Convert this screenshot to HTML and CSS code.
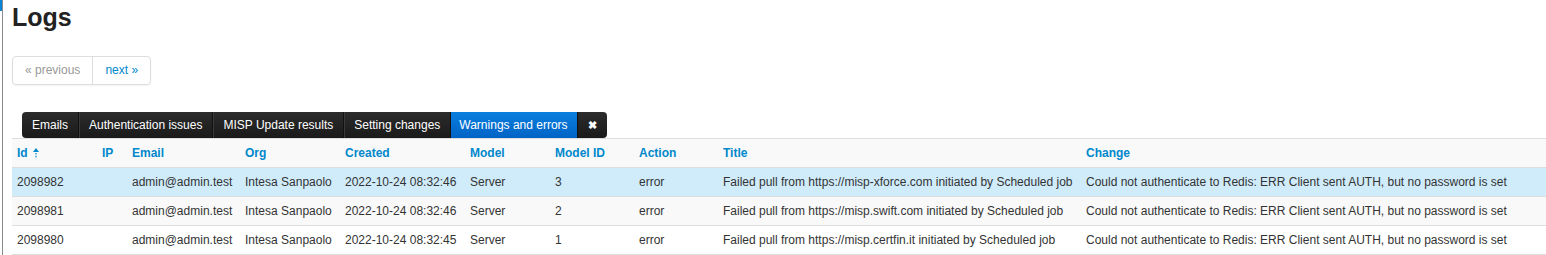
FILE: index.html
```html
<!doctype html>
<html lang="en">
  <head>
    <meta charset="utf-8">
    <title>Logs</title>
    <link rel="stylesheet" href="styles.css">
  </head>
  <body>
    <section class="page">
      <div class="side_strip"><div class="side_strip__mark"></div></div>
      <div class="content">
        <h2>Logs</h2>
        <div class="pagination">
          <span class="pagination__item disabled">&laquo; previous</span>
          <a class="pagination__item" href="#">next &raquo;</a>
        </div>
        <div class="filter_bar">
          <a class="filter_bar__item" href="#">Emails</a>
          <a class="filter_bar__item" href="#">Authentication issues</a>
          <a class="filter_bar__item" href="#">MISP Update results</a>
          <a class="filter_bar__item" href="#">Setting changes</a>
          <a class="filter_bar__item active" href="#">Warnings and errors</a>
          <a class="filter_bar__item close" href="#">&#10006;</a>
        </div>
        <table class="logs">
          <colgroup>
            <col style="width:85px"><col style="width:30px"><col style="width:113px"><col style="width:100px">
            <col style="width:125px"><col style="width:85px"><col style="width:84px"><col style="width:84px">
            <col style="width:363px"><col>
          </colgroup>
          <thead>
            <tr>
              <th>Id <svg class="sort_icon" width="6" height="10" viewBox="0 0 6 10"><path d="M3 0 L6 4 L0 4 Z" fill="#0088cc"/><rect x="2.4" y="5" width="1.2" height="1.5" fill="#0088cc"/><rect x="2.4" y="7.8" width="1.2" height="1.5" fill="#0088cc"/></svg></th>
              <th>IP</th>
              <th>Email</th>
              <th>Org</th>
              <th>Created</th>
              <th>Model</th>
              <th>Model ID</th>
              <th>Action</th>
              <th>Title</th>
              <th>Change</th>
            </tr>
          </thead>
          <tbody>
            <tr class="info">
              <td>2098982</td><td></td><td>admin@admin.test</td><td>Intesa Sanpaolo</td><td>2022-10-24 08:32:46</td><td>Server</td><td>3</td><td>error</td>
              <td>Failed pull from https://misp-xforce.com initiated by Scheduled job</td>
              <td>Could not authenticate to Redis: ERR Client sent AUTH, but no password is set</td>
            </tr>
            <tr class="odd">
              <td>2098981</td><td></td><td>admin@admin.test</td><td>Intesa Sanpaolo</td><td>2022-10-24 08:32:46</td><td>Server</td><td>2</td><td>error</td>
              <td>Failed pull from https://misp.swift.com initiated by Scheduled job</td>
              <td>Could not authenticate to Redis: ERR Client sent AUTH, but no password is set</td>
            </tr>
            <tr>
              <td>2098980</td><td></td><td>admin@admin.test</td><td>Intesa Sanpaolo</td><td>2022-10-24 08:32:45</td><td>Server</td><td>1</td><td>error</td>
              <td>Failed pull from https://misp.certfin.it initiated by Scheduled job</td>
              <td>Could not authenticate to Redis: ERR Client sent AUTH, but no password is set</td>
            </tr>
          </tbody>
        </table>
      </div>
    </section>
  </body>
</html>
```

FILE: styles.css
```css
html, body{
  margin: 0;
  overflow: hidden;
}
body{
  font-family: "Liberation Sans", Helvetica, Arial, sans-serif;
  font-size: 12px;
  color: #333;
  background: #fff;
}
.page{
  display: flex;
  min-height: 255px;
}
/*--------------------------*/
.side_strip{
  width: 2px;
  flex: none;
}
.side_strip__mark{
  height: 11px;
  background: #0a84d6;
}
.content{
  flex: 1;
  border-left: 1px solid #8c8c8c;
  padding-left: 9px;
}
/*--------------------------*/
h2{
  margin: 0;
  padding-top: 1px;
  font-size: 25px;
  line-height: 32px;
  font-weight: bold;
  color: #222;
}
/*--------------------------*/
.pagination{
  display: inline-flex;
  margin-top: 23px;
  border: 1px solid #ddd;
  border-radius: 4px;
  box-shadow: 0 1px 2px rgba(0,0,0,0.05);
}
.pagination__item{
  padding: 5px 12px;
  line-height: 17px;
  color: #0088cc;
  text-decoration: none;
}
.pagination__item + .pagination__item{
  border-left: 1px solid #ddd;
}
.pagination__item.disabled{
  color: #999;
}
/*--------------------------*/
.filter_bar{
  display: flex;
  width: max-content;
  margin: 27px 0 0 10px;
  background: linear-gradient(#2c2c2c, #1a1a1a);
  border-radius: 4px;
  overflow: hidden;
}
.filter_bar__item{
  padding: 0 10px;
  line-height: 26px;
  color: #fff;
  text-decoration: none;
  border-right: 1px solid #111;
  box-shadow: 1px 0 0 #3a3a3a;
}
.filter_bar__item.active{
  padding: 0 9px 0 8px;
  background: linear-gradient(#0a7fe0, #0063c4);
  box-shadow: none;
}
.filter_bar__item.close{
  padding: 0 10px;
  font-size: 11px;
  font-weight: bold;
  border-right: none;
  box-shadow: none;
}
/*--------------------------*/
.logs{
  width: 1534px;
  table-layout: fixed;
  border-collapse: collapse;
}
.logs th, .logs td{
  padding: 0 5px;
  height: 28px;
  text-align: left;
  white-space: nowrap;
  overflow: hidden;
  border-top: 1px solid #ddd;
}
.logs th{
  color: #0088cc;
  font-weight: bold;
  background: #f9f9f9;
}
.logs tbody tr:last-child td{
  border-bottom: 1px solid #ddd;
}
.logs tr.info td{
  background: #d0ecfb;
}
.logs tr.odd td{
  background: #f9f9f9;
}
.sort_icon{
  margin-left: 2px;
  vertical-align: -1px;
}
```
